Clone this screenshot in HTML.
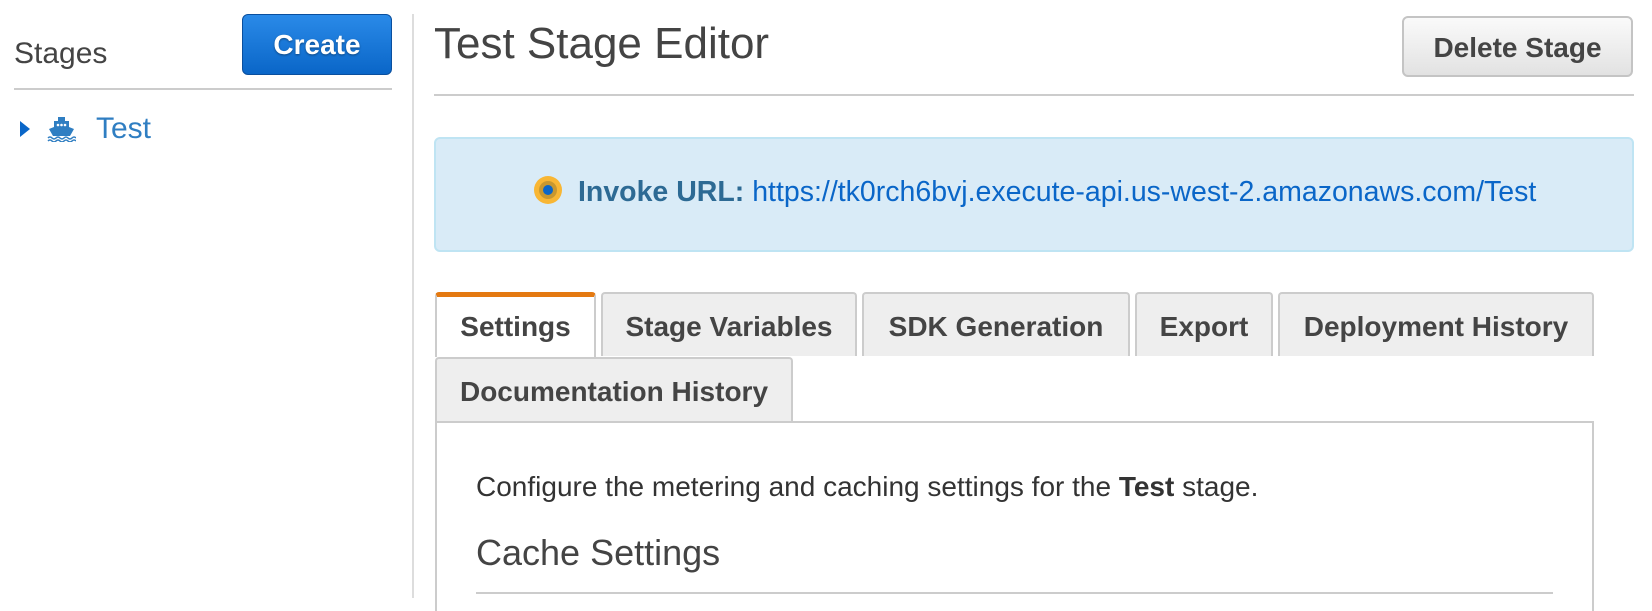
<!DOCTYPE html>
<html><head><meta charset="utf-8"><style>
*{box-sizing:border-box;margin:0;padding:0}
body{width:1652px;height:598px;overflow:hidden;background:#fff;font-family:"Liberation Sans",Arial,sans-serif;position:relative;color:#444}
.a{position:absolute;white-space:nowrap}
.btn{position:absolute;border-radius:6px;font-weight:bold;font-size:28px;display:flex;align-items:center;justify-content:center;white-space:nowrap}
.tab{position:absolute;background:#eee;border:2px solid #ccc;border-bottom:none;border-radius:4px 4px 0 0;font-weight:bold;font-size:28px;color:#444;display:flex;align-items:center;justify-content:center;white-space:nowrap;padding-top:3px}
</style></head><body>
<div class="a" style="left:14px;top:37px;font-size:30px;color:#444">Stages</div>
<div class="btn" style="left:242px;top:14px;width:150px;height:61px;background:linear-gradient(#2a8ae8,#0a66c8);border:1px solid #0a4f9e;color:#fff;text-shadow:0 1px 2px rgba(0,0,0,.4)">Create</div>
<div class="a" style="left:14px;top:88px;width:378px;height:2px;background:#ccc"></div>
<svg class="a" style="left:19px;top:120px" width="12" height="18"><path d="M1 1 L11 9 L1 17Z" fill="#0a66c8"/></svg>
<svg class="a" style="left:47px;top:116px" width="29" height="26" viewBox="0 0 29 26"><rect x="11" y="1" width="7" height="4" fill="#2f7ec2"/><path d="M7 5h15v6l5 2-4 7H6l-4-7 5-2z" fill="#2f7ec2"/><circle cx="11" cy="9" r="1.3" fill="#fff"/><circle cx="14.5" cy="9" r="1.3" fill="#fff"/><circle cx="18" cy="9" r="1.3" fill="#fff"/><path d="M1 22q2-2 4 0t4 0 4 0 4 0 4 0 4 0 4 0M1 25q2-2 4 0t4 0 4 0 4 0 4 0 4 0 4 0" stroke="#2f7ec2" stroke-width="1.5" fill="none"/></svg>
<div class="a" style="left:96px;top:112px;font-size:30px;color:#2f7ec2">Test</div>
<div class="a" style="left:412px;top:14px;width:2px;height:584px;background:#ddd"></div>
<div class="a" style="left:434px;top:19px;font-size:44px;color:#444">Test Stage Editor</div>
<div class="btn" style="left:1402px;top:16px;width:231px;height:61px;background:linear-gradient(#fafafa,#e2e2e2);border:2px solid #c4c4c4;color:#444;padding-top:3px">Delete Stage</div>
<div class="a" style="left:434px;top:94px;width:1200px;height:2px;background:#ccc"></div>
<div class="a" style="left:434px;top:137px;width:1200px;height:115px;background:#d9ebf7;border:2px solid #bfe4f3;border-radius:6px"></div>
<svg class="a" style="left:533px;top:175px" width="30" height="30"><circle cx="15" cy="15" r="14" fill="#f8b634"/><circle cx="15" cy="15" r="9" fill="#c8972f"/><circle cx="15" cy="15" r="5" fill="#0a66c8"/></svg>
<div class="a" style="left:578px;top:176px;font-size:28.5px"><b style="color:#2d6a94">Invoke URL:</b> <span style="color:#0a66c8">https://tk0rch6bvj.execute-api.us-west-2.amazonaws.com/Test</span></div>
<div class="tab" style="left:435px;top:292px;width:161px;height:65px;background:#fff;border-top:5px solid #e47911;padding-top:0">Settings</div>
<div class="tab" style="left:601px;top:292px;width:256px;height:64px">Stage Variables</div>
<div class="tab" style="left:862px;top:292px;width:268px;height:64px">SDK Generation</div>
<div class="tab" style="left:1135px;top:292px;width:138px;height:64px">Export</div>
<div class="tab" style="left:1278px;top:292px;width:316px;height:64px">Deployment History</div>
<div class="tab" style="left:435px;top:357px;width:358px;height:65px">Documentation History</div>
<div class="a" style="left:435px;top:421px;width:1159px;height:190px;border:2px solid #ccc;border-bottom:none"></div>
<div class="a" style="left:476px;top:471px;font-size:28px;color:#333">Configure the metering and caching settings for the <b>Test</b> stage.</div>
<div class="a" style="left:476px;top:532px;font-size:36px;color:#444">Cache Settings</div>
<div class="a" style="left:476px;top:592px;width:1077px;height:2px;background:#ccc"></div>
</body></html>
